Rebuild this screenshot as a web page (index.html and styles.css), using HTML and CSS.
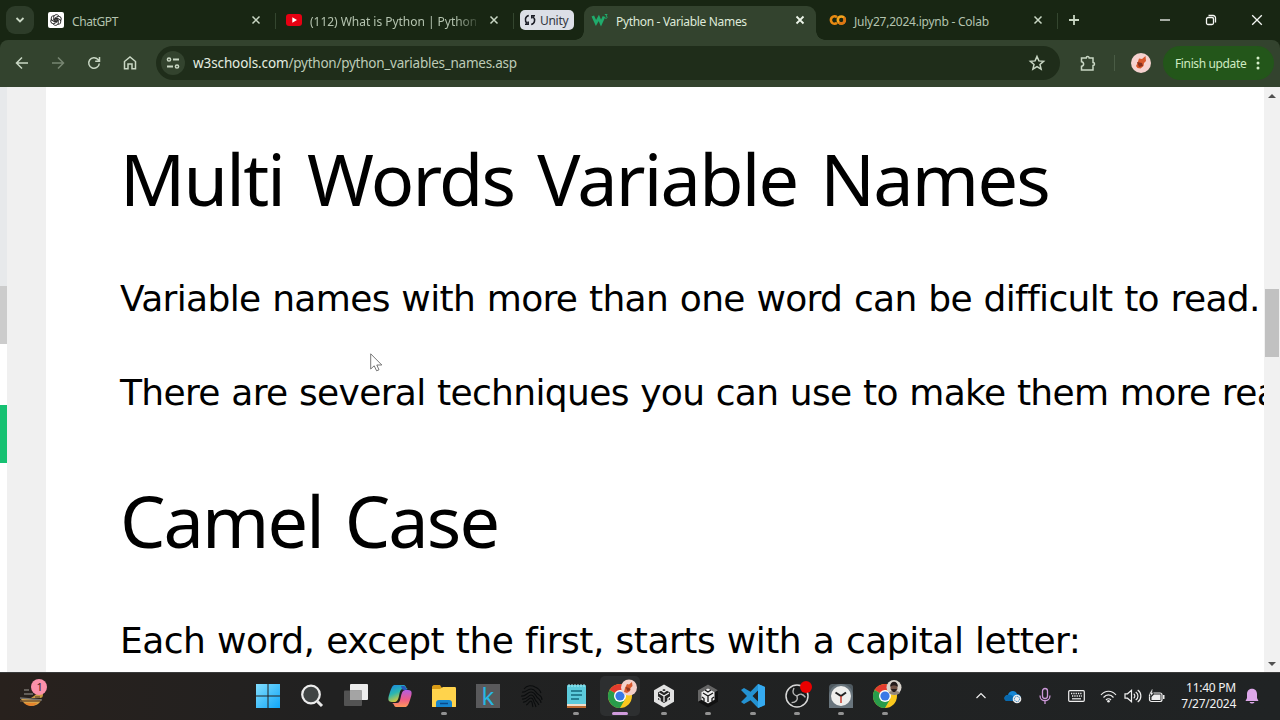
FILE: index.html
```
<!DOCTYPE html>
<html lang="en">
<head>
<meta charset="utf-8">
<title>Python - Variable Names</title>
<link rel="stylesheet" href="styles.css">
</head>
<body>

<div class="tabstrip">
  <div class="tab-search"><svg width="12" height="12" viewBox="0 0 12 12"><path d="M2.5 4l3.5 3.5L9.500 4" class="line bold"/></svg></div>
  <div class="tab">
    <svg class="favicon" viewBox="0 0 16 16"><rect width="16" height="16" rx="2" fill="#fff"/><g fill="none" stroke="#222" stroke-width=".9"><path id="knot" d="M6 4.300a2.600 2.600 0 0 1 4.700-.4L7 6v4.200"/><use href="#knot" transform="rotate(60 8 8)"/><use href="#knot" transform="rotate(120 8 8)"/><use href="#knot" transform="rotate(180 8 8)"/><use href="#knot" transform="rotate(240 8 8)"/><use href="#knot" transform="rotate(300 8 8)"/></g></svg>
    <span class="title t-gpt">ChatGPT</span>
    <svg class="close" viewBox="0 0 16 16"><path d="M4.500 4.500l7 7M11.500 4.500l-7 7" class="line"/></svg>
  </div>
  <div class="tab">
    <svg class="favicon" viewBox="0 0 16 16"><rect y="2" width="16" height="12" rx="3" fill="#e60012"/><path d="M6.300 5.300v5.400L11 8z" fill="#fff"/></svg>
    <span class="title fade t-yt">(112) What is Python | Python P</span>
    <svg class="close" viewBox="0 0 16 16"><path d="M4.500 4.500l7 7M11.500 4.500l-7 7" class="line"/></svg>
  </div>
  <div class="group-chip"><svg width="12" height="12" viewBox="0 0 12 12"><path d="M4.800 1.500C.8 2.500.5 7 3 9.300M7.200 10.500c4-1 4.300-5.500 1.800-7.800M1 10.200h3.200V7.500M11 1.800H7.800v2.700" fill="none" stroke="#191b25" stroke-width="1.500"/></svg><span>Unity</span></div>
  <div class="tab active">
    <svg class="favicon" viewBox="0 0 16 16"><path d="M.8 4l3.200 7 2.800-5 2.200 5 3-6.500" fill="none" stroke="#20ab6c" stroke-width="2.800"/><path d="M12.800 2.500h2.300l-1.200 1.600c2.400.2 1.300 3-.9 1.900" fill="none" stroke="#20ab6c"/></svg>
    <span class="title t-w3">Python - Variable Names</span>
    <svg class="close" viewBox="0 0 16 16"><path d="M4.500 4.500l7 7M11.500 4.500l-7 7" class="line bold"/></svg>
  </div>
  <div class="tab last">
    <svg class="favicon" viewBox="0 0 16 16"><g fill="none" stroke-width="2.600"><path d="M7 5.200A3.700 3.700 0 1 0 7 10.800" stroke="#e88a12"/><circle cx="11.300" cy="8" r="3.500" stroke="#f5a51d"/><path d="M8.800 10.500a3.500 3.500 0 0 0 5-5" stroke="#dc7412"/></g></svg>
    <span class="title t-colab">July27,2024.ipynb - Colab</span>
    <svg class="close" viewBox="0 0 16 16"><path d="M4.500 4.500l7 7M11.500 4.500l-7 7" class="line"/></svg>
  </div>
  <svg class="new-tab" width="16" height="16" viewBox="0 0 16 16"><path d="M8 3v10M3 8h10" class="line bold"/></svg>
  <div class="window-buttons">
    <svg width="12" height="12" viewBox="0 0 12 12"><path d="M1 6h10"/></svg>
    <svg width="12" height="12" viewBox="0 0 12 12"><rect x="1.500" y="3.500" width="7" height="7" rx="1.500"/><path d="M3.500 1.500h4.500a2.500 2.500 0 0 1 2.500 2.500v4.500"/></svg>
    <svg width="12" height="12" viewBox="0 0 12 12"><path d="M1.200 1.200l9.600 9.600M10.800 1.200L1.200 10.800"/></svg>
  </div>
</div>

<div class="toolbar-wrap">
<div class="toolbar">
  <div class="nav">
    <svg width="16" height="16" viewBox="0 0 16 16"><path d="M14 8H3M8 2.500L2.500 8 8 13.500" class="line"/></svg>
    <svg class="dim" width="16" height="16" viewBox="0 0 16 16"><path d="M2 8h11M8 2.500L13.500 8 8 13.500" class="line"/></svg>
    <svg width="16" height="16" viewBox="0 0 16 16"><path d="M13.300 8.500A5.300 5.300 0 1 1 12 4.500l1.300 1.500M13.500 2v4.300H9.200" class="line"/></svg>
    <svg width="16" height="16" viewBox="0 0 16 16"><path d="M2.500 6.500L8 2l5.500 4.500v7.300H10V9H6v4.800H2.500z" class="line"/></svg>
  </div>
  <div class="omnibox">
    <div class="site-info"><svg width="14" height="14" viewBox="0 0 14 14"><path d="M7 3.500h6M1 10.500h6" class="line bold"/><circle cx="3" cy="3.500" r="1.600" class="line"/><circle cx="11" cy="10.500" r="1.600" class="line"/></svg></div>
    <span class="url"><b>w3schools.com</b>/python/python_variables_names.asp</span>
    <svg class="star" width="16" height="16" viewBox="0 0 16 16"><path d="M8 1.500l1.900 4.400 4.700.4-3.600 3.100 1.100 4.700L8 11.600l-4.100 2.500L5 9.400 1.400 6.300l4.700-.4z" class="line"/></svg>
  </div>
  <svg class="puzzle" width="18" height="18" viewBox="0 0 18 18"><path d="M2.500 4h4.700a1.500 1.500 0 0 1 3 0H14v4.500a1.500 1.500 0 0 1 0 3V16H2.500v-3.700c2.800-.5 2.800-4.100 0-4.600z" class="line"/></svg>
  <div class="divider"></div>
  <svg class="avatar" width="20" height="20" viewBox="0 0 20 20"><circle cx="10" cy="10" r="10" fill="#f6d2cf"/><path d="M8 5.500l3 .5 3.500-3 .5 5-2 2-.5 3-3 2.500-3-.5-1.500-2 1.500-3z" fill="#d9582c"/><path d="M6 9l5 1 1 3-4 1z" fill="#88301e"/></svg>
  <div class="update"><span>Finish update</span><svg width="4" height="14" viewBox="0 0 4 14" fill="#d5efc9"><circle cx="2" cy="2" r="1.500"/><circle cx="2" cy="7" r="1.500"/><circle cx="2" cy="12" r="1.500"/></svg></div>
</div>
</div>

<div class="viewport">
  <div class="sidebar"><div class="side-top"></div><div class="side-thumb"></div><div class="side-gap"></div><div class="side-active"></div></div>
  <div class="side-scroll"></div>
  <div class="content">
    <h2 class="h-multi">Multi Words Variable Names</h2>
    <p class="p-one">Variable names with more than one word can be difficult to read.</p>
    <p class="p-two">There are several techniques you can use to make them more rea</p>
    <h2 class="h-camel">Camel Case</h2>
    <p class="p-three">Each word, except the first, starts with a capital letter:</p>
  </div>
  <div class="scrollbar">
    <svg width="8" height="4" viewBox="0 0 8 4"><path d="M0 4l4-4 4 4z" fill="#505050"/></svg>
    <div class="thumb"></div>
    <svg class="down" width="8" height="4" viewBox="0 0 8 4"><path d="M0 0l4 4 4-4z" fill="#505050"/></svg>
  </div>
</div>

<div class="taskbar">
  <svg class="widget" width="32" height="32" viewBox="0 0 32 32"><path d="M4 19h20c2 0 3-1 3-4-2-2-6-1-9 2l-3 2z" fill="#c99a45"/><path d="M5 20h20c-1 9-16 9-20 0z" fill="#d9a347"/><path d="M8 24h13c-3 4-9 4-13 0z" fill="#e5832c"/><path d="M8 11h5M8 15h9M4 19l22 2" stroke="#77736e" stroke-width="1.700"/><path d="M4 22h20M19 18h5" stroke="#725433" stroke-width="1.500"/><circle cx="23" cy="8" r="8" fill="#fb91ab"/><text x="20.500" y="12.200" class="badge">1</text></svg>
  <div class="apps">
    <div class="app"><svg width="24" height="24" viewBox="0 0 24 24"><defs><linearGradient id="win" x2="1" y2="1"><stop stop-color="#82ddfd"/><stop offset="1" stop-color="#10a6f8"/></linearGradient></defs><path d="M0 0h11.500v11.500H0zM12.500 0H24v11.500H12.500zM0 12.500h11.500V24H0zM12.500 12.500H24V24H12.500z" fill="url(#win)"/></svg></div>
    <div class="app"><svg width="24" height="24" viewBox="0 0 24 24"><path d="M17.500 17.500L22 22" stroke="#e8e8e8" stroke-width="3"/><circle cx="11" cy="10.500" r="8.800" fill="#414545" stroke="#ececec" stroke-width="2.200"/></svg></div>
    <div class="app"><svg width="24" height="24" viewBox="0 0 24 24"><rect x="6" width="18" height="16" rx="1" fill="#ececec"/><rect y="6.500" width="18" height="15.500" rx="1" fill="#535353"/><rect x="6" y="6.500" width="12" height="9.500" fill="#a4a4a4"/></svg></div>
    <div class="app"><svg width="24" height="24" viewBox="0 0 24 24"><defs><linearGradient id="copA" x2=".5" y2="1"><stop stop-color="#1b83e5"/><stop offset=".5" stop-color="#29b6b2"/><stop offset="1" stop-color="#f2cb26"/></linearGradient><linearGradient id="copB" x2="0" y2="1"><stop stop-color="#b45ee2"/><stop offset=".55" stop-color="#ee5b88"/><stop offset="1" stop-color="#ff9859"/></linearGradient></defs><path d="M7 1h9c2 0 2 4 4 4h-5c-3 0-3 3-4 7-1 4-2 6-5 6H4c-5 0-4-4-2-10C4 2 5 1 7 1z" fill="url(#copA)"/><path d="M17 23H8c-2 0-2-4-4-4h5c3 0 3-3 4-7 1-4 2-6 5-6h2c5 0 4 4 2 10-2 6-3 7-5 7z" fill="url(#copB)"/><path d="M13 2h3c2 0 2 4 4 4h-3c-3 0-3-1-4-4z" fill="#2858bd"/></svg></div>
    <div class="app open"><svg width="24" height="24" viewBox="0 0 24 24"><path d="M0 3c0-1 1-2 2-2h6l2 3h13v8H0z" fill="#d99b16"/><path d="M0 5h8l3-2h12c1 0 1 1 1 2v17c0 1 0 1-1 1H1c-1 0-1 0-1-1z" fill="#ffd34c"/><path d="M4 23v-4c0-2 1-3 3-3h10c2 0 3 1 3 3v4z" fill="#1685cf"/><path d="M8 19.500h8" stroke="#0a4989" stroke-width="1.500"/></svg></div>
    <div class="app kite"><span>k</span></div>
    <div class="app"><svg width="24" height="24" viewBox="0 0 24 24" fill="none" stroke="#0b0d0e" stroke-width="1.100"><path d="M4 5c3-4 8-4 11-2 3 1 5 3 6 6M2 8c4 1 5-3 9-3 5 0 4 4 8 6 2 1 3 3 3 5M1 12c5 1 6-4 10-4 5 0 4 5 8 7 1 1 2 2 2 4M2 15c5 1 6-4 9-4 4 0 3 5 6 7l2 3M3 18c4 1 5-4 8-4 3 0 2 4 4 6l1 3M6 21c2 0 3-4 5-4 2 1 1 4 2 6"/></svg></div>
    <div class="app open"><svg width="24" height="24" viewBox="0 0 24 24"><rect x="3" y="1" width="19" height="21" rx="1" fill="#5ccbdc"/><path d="M3 20h19v3H3z" fill="#f0dfcd"/><path d="M3 23h19" stroke="#bc6a31" stroke-width="2"/><path d="M7 7h11M7 11h11M7 15h8" stroke="#146a7c" stroke-width="1.400"/><path d="M5 0v3M8 0v3M11 0v3M14 0v3M17 0v3M20 0v3" stroke="#a9eef4"/></svg></div>
    <div class="app open current"><svg width="32" height="32" viewBox="0 0 32 32"><g id="chrome"><circle cx="16" cy="16" r="12" fill="#fac81e"/><path d="M16 16L5.600 10a12 12 0 0 1 20.800 0H16z" fill="#e33b2e"/><path d="M5.600 10A12 12 0 0 0 16 28l5.200-9L16 16z" fill="#299c4b"/><circle cx="16" cy="16" r="6" fill="#fff"/><circle cx="16" cy="16" r="4.600" fill="#3978e6"/></g><circle cx="25" cy="7.500" r="8" fill="#f4d0ca"/><path d="M23 4l2 .5 3-2.500.5 4-2 2-.5 3-3 2-3-1 1-4z" fill="#d9582c"/><path d="M21.500 7l4 1 1 2-3 1z" fill="#8f351e"/></svg></div>
    <div class="app open"><svg width="24" height="24" viewBox="0 0 24 24"><path d="M12 .5l10 5.700v11.600L12 23.500 2 17.800V6.200z" fill="#e2e2e2"/><path d="M12 5l6 3.500v7L12 19l-6-3.500v-7z" fill="#242424"/><path d="M12 12v6M12 12L7 9M12 12l5-3M9 6l3 2 3-2M6 13l2 1.500v3M18 13l-2 1.500v3" stroke="#ededed" stroke-width="1.300" fill="none"/></svg></div>
    <div class="app open"><svg width="24" height="24" viewBox="0 0 24 24"><path d="M12 .5l10 5.700v11.600L12 23.500 2 17.800V6.200z" fill="#111"/><path d="M12 .5l10 5.700-4 2.300-6-3.500-6 3.500v7l-4 2.300V6.200z" fill="#656565"/><path d="M12 4.500l6.500 3.700v7.600L12 19.500l-6.500-3.700V8.200z" fill="#ececec"/><path d="M12 12v6M12 12L7 9M12 12l5-3M9 6l3 2 3-2M6 13l2 1.500v3M18 13l-2 1.500v3" stroke="#171717" stroke-width="1.300" fill="none"/></svg></div>
    <div class="app open"><svg width="24" height="24" viewBox="0 0 24 24"><path d="M17 0l7 3v18l-7 3-7.500-7.700L3 20l-3-2 6-6-6-6 3-2 6.500 3.700zM17 6.500L11.500 12l5.500 5.500z" fill="#2492d2" fill-rule="evenodd"/><path d="M17 0l7 3v18l-7 3z" fill="#35aaf0"/></svg></div>
    <div class="app open"><svg width="32" height="32" viewBox="0 0 32 32"><circle cx="16" cy="16" r="11" fill="#191b1c" stroke="#d7d7d7" stroke-width="1.500"/><g fill="none" stroke="#b8b8b8" stroke-width="1.400"><path id="obs" d="M16 16c-4-1-5-4-3-8"/><use href="#obs" transform="rotate(120 16 16)"/><use href="#obs" transform="rotate(240 16 16)"/></g><circle cx="25" cy="7" r="6" fill="#eb0000"/></svg></div>
    <div class="app open"><svg width="24" height="24" viewBox="0 0 24 24"><path d="M0 24V4c0-3 1-4 4-4h16c3 0 4 1 4 4v20z" fill="#4f5a61"/><path d="M0 24V12C0-4 24-4 24 12v12z" fill="#69757d"/><circle cx="12" cy="12" r="10" fill="#eeeeec"/><path d="M6.500 8.500L12 12l5-3.500" fill="none" stroke="#222" stroke-width="2"/><path d="M12 12v7" stroke="#c83b2c" stroke-width="1.500"/></svg></div>
    <div class="app open"><svg width="32" height="32" viewBox="0 0 32 32"><use href="#chrome"/><circle cx="25" cy="7.500" r="7.500" fill="#d7d2cb"/><path d="M20 13c0-3 10-3 11 0-3 2.500-8 2.500-11 0z" fill="#92857a"/><circle cx="25" cy="8" r="3.500" fill="#705044"/><path d="M21 7c0-7 8-7 8 0-2-2-6-2-8 0zM22 9h6l-2 3h-2z" fill="#241b1b"/></svg></div>
  </div>
  <div class="tray">
    <svg width="12" height="12" viewBox="0 0 12 12"><path d="M1.500 8L6 3.500 10.500 8" class="tray-line"/></svg>
    <svg class="cloud" width="18" height="16" viewBox="0 0 18 16"><path d="M3 13c-4-1-3-6 1-6 1-5 8-5 9-1 4 0 5 5 2 7z" fill="#1687d5"/><path d="M4 7c3-1 5 1 8 4l-3 2H3c-4-1-3-6 1-6z" fill="#0869ae"/><circle cx="13" cy="11" r="4.300" fill="#eee"/><circle cx="13" cy="11" r="2.600" fill="none" stroke="#247ab5" stroke-dasharray="1.300 .7"/></svg>
    <svg class="mic" width="14" height="18" viewBox="0 0 14 18" fill="none" stroke="#cc98d8" stroke-width="1.300"><rect x="4.500" y="1.500" width="5" height="10" rx="2.500"/><path d="M2 8.500c0 7 10 7 10 0M7 14v3"/></svg>
    <svg class="keyboard" width="17" height="12" viewBox="0 0 17 12"><rect x=".7" y=".7" width="15.600" height="10.600" rx="1" class="tray-line"/><path d="M3 3.500h11M4 6h10" stroke="#eee" stroke-width="1.300" stroke-dasharray="1.300 1"/><path d="M4 8.800h9" class="tray-line"/></svg>
    <svg class="wifi" width="17" height="13" viewBox="0 0 17 13"><path d="M1 5c4-5 11-5 15 0M3.500 7.500c3-3.500 7-3.500 10 0M6 10c1.500-1.700 3.500-1.700 5 0" class="tray-line"/><circle cx="8.500" cy="11.200" r="1.300" fill="#eee"/></svg>
    <svg class="sound" width="17" height="14" viewBox="0 0 17 14"><path d="M1 4.800h2.500L7.500 1.300v11.400L3.500 9.200H1zM9.700 4.800c1.500 1 1.500 3.400 0 4.400M11.700 2.900c3 2 3 6.200 0 8.200M13.700 1c4.200 3 4.200 9 0 12" class="tray-line"/></svg>
    <svg class="battery" width="17" height="14" viewBox="0 0 17 14"><rect x="1.500" y="4" width="12.500" height="8.500" rx="2" class="tray-line"/><path d="M6 5.500h6.500V11H3.500V8zM15 6h1.500v4H15z" fill="#eee"/><path d="M4 0L1 5h2L2 8l4-4H4l1-4z" fill="#eee" stroke="#202324" stroke-width=".6"/></svg>
    <div class="clock"><div class="time">11:40 PM</div><div class="date">7/27/2024</div></div>
    <svg class="bell" width="14" height="16" viewBox="0 0 14 16"><path d="M2 6c0-7 10-7 10 0v4l1.500 3H.5L2 10zM4.500 14h5c-1 2-4 2-5 0z" fill="#dda7e9"/></svg>
  </div>
</div>

<svg class="cursor" width="13" height="19" viewBox="0 0 13 19"><path d="M.7.800v15.200l3.500-3.200 2.400 5 2.400-1-2.200-4.800h5z" fill="#fff" stroke="#555" stroke-width=".8"/></svg>
</body>
</html>
```
FILE: styles.css
```
* { box-sizing: border-box; }

body {
  margin: 0;
  width: 1280px;
  height: 720px;
  overflow: hidden;
  background: #fff;
  font-family: "Noto Sans", "Open Sans", sans-serif;
  font-size: 12px;
}

svg { display: block; flex: none; overflow: visible; }
.line { fill: none; stroke: #c9d7c4; stroke-width: 1.5; }
.bold { stroke-width: 1.8; }

/* Tab strip */

.tabstrip {
  display: flex;
  align-items: flex-start;
  height: 40px;
  padding-left: 6px;
  background: #182613;
  color: #b4c3af;
}
.tab-search {
  width: 28px;
  height: 28px;
  margin: 6px 6px 0 0;
  padding: 8px;
  border-radius: 9px;
  background: #2d3c29;
}
.tab {
  position: relative;
  display: flex;
  align-items: center;
  width: 238px;
  height: 28px;
  margin-top: 6px;
  padding: 0 14px 0 8px;
}
.tab::after {
  content: "";
  position: absolute;
  right: 2px;
  top: 7px;
  width: 1px;
  height: 16px;
  background: #34462f;
}
.favicon { width: 16px; height: 16px; margin-right: 8px; }
.close { width: 16px; height: 16px; }
.title {
  flex: 1;
  min-width: 0;
  white-space: nowrap;
  line-height: 20px;
  margin: 3px 10px 0 0;
}
.t-gpt { letter-spacing: -0.4px; }
.t-yt { letter-spacing: -0.03px; }
.t-w3 { letter-spacing: -0.33px; }
.t-colab { letter-spacing: -0.24px; }
.fade {
  -webkit-mask-image: linear-gradient(to right, #000 145px, transparent 172px);
  mask-image: linear-gradient(to right, #000 145px, transparent 172px);
}
.group-chip {
  display: flex;
  align-items: center;
  gap: 4px;
  width: 54px;
  height: 20px;
  margin: 10px 10px 0 4px;
  padding-left: 4px;
  border-radius: 5px;
  background: #dcdfe7;
  color: #33363d;
  letter-spacing: -0.3px;
}
.active {
  width: 232px;
  height: 34px;
  margin-right: 6px;
  padding: 0 8px 6px;
  border-radius: 9px 9px 0 0;
  background: #33432e;
  color: #dfead9;
}
.active::before, .active::after {
  content: "";
  position: absolute;
  top: auto;
  bottom: 0;
  width: 9px;
  height: 9px;
  background: radial-gradient(circle at 0 0, #182613 8.5px, #33432e 9px);
}
.active::before { left: -9px; }
.active::after {
  right: -9px;
  background: radial-gradient(circle at 100% 0, #182613 8.5px, #33432e 9px);
}
.active .line { stroke: #edf5e9; }
.new-tab { margin: 12px 0 0 6px; }
.window-buttons {
  display: flex;
  gap: 34px;
  margin: 14px 17px 0 auto;
  fill: none;
  stroke: #f5f7f4;
  stroke-width: 1.3;
}

/* Toolbar */

.toolbar-wrap { height: 47px; background: #182613; }
.toolbar {
  display: flex;
  align-items: center;
  height: 47px;
  padding: 0 6px 1px 14px;
  border-radius: 8px 8px 0 0;
  background: #33432e;
}
.nav { display: flex; gap: 20px; margin-right: 18px; }
.dim { opacity: .45; }
.omnibox {
  display: flex;
  align-items: center;
  width: 904px;
  height: 34px;
  padding: 0 15px 0 5px;
  border-radius: 17px;
  background: #1f2d1a;
}
.site-info {
  width: 24px;
  height: 24px;
  padding: 5px;
  border-radius: 50%;
  background: #33432e;
}
.url {
  margin-left: 8px;
  color: #bdcbb7;
  font-size: 13.5px;
  letter-spacing: -0.25px;
  white-space: nowrap;
}
.url b { color: #e5ede1; font-weight: normal; letter-spacing: -0.1px; }
.star { margin-left: auto; }
.puzzle { margin-left: 19px; }
.divider { width: 1px; height: 16px; margin: 0 16px 0 17px; background: #4a5c45; }
.update {
  display: flex;
  align-items: center;
  justify-content: space-between;
  width: 111px;
  height: 34px;
  margin-left: auto;
  padding: 0 14px 0 12px;
  border-radius: 17px;
  background: #23561a;
  color: #cfebc2;
  letter-spacing: -0.37px;
  white-space: nowrap;
}

/* Page */

.viewport { display: flex; height: 585px; background: #fff; }
.sidebar { flex: none; width: 7px; }
.side-top { height: 199px; background: #e7e9eb; }
.side-thumb { height: 58px; background: #ccc; }
.side-gap { height: 61px; }
.side-active { height: 58px; background: #16c172; }
.side-scroll { flex: none; width: 39px; background: #f0f0f0; }
.content {
  flex: none;
  width: 1218px;
  height: 585px;
  padding: 37px 0 0 74px;
  overflow: hidden;
  color: #000;
  white-space: nowrap;
}
h2 {
  margin: 0 0 40px;
  font-size: 72px;
  font-weight: normal;
  line-height: 108px;
}
p {
  margin: 0 0 40px;
  font-family: "DejaVu Sans", Verdana, sans-serif;
  font-size: 36px;
  line-height: 54px;
}
.h-multi { letter-spacing: -1.75px; word-spacing: 5.8px; }
.h-camel { margin-top: 46px; letter-spacing: -1.9px; word-spacing: 5px; }
.p-one { letter-spacing: -0.65px; word-spacing: 0.8px; }
.p-two { letter-spacing: -0.65px; word-spacing: 0.6px; }
.p-three { letter-spacing: -0.5px; word-spacing: 0.7px; }
.scrollbar {
  flex: 1;
  display: flex;
  flex-direction: column;
  align-items: center;
  padding: 7px 0 6px;
  background: #f1f1f1;
}
.thumb { width: 14px; height: 68px; margin-top: 191px; background: #c1c1c1; }
.down { margin-top: auto; }

/* Taskbar */

.taskbar {
  display: flex;
  height: 48px;
  border-top: 1px solid #3a3b3b;
  background: linear-gradient(to right, #28211d, #212121 330px, #202324);
}
.widget { margin: 6px 0 0 16px; }
.badge { font-size: 11px; fill: #391d27; }
.apps { display: flex; margin-left: 197.500px; }
.app {
  position: relative;
  display: flex;
  align-items: center;
  justify-content: center;
  width: 44.1px;
  height: 46px;
}
.open::after {
  content: "";
  position: absolute;
  left: 19px;
  bottom: 4px;
  width: 6px;
  height: 3px;
  border-radius: 2px;
  background: #929292;
}
.current::before {
  content: "";
  position: absolute;
  inset: 3px 2px;
  border-radius: 5px;
  background: #2d2f30;
}
.current svg { position: relative; }
.current::after { left: 14px; width: 16px; background: #d09bdc; }
.kite span {
  width: 24px;
  height: 24px;
  background: #59595b;
  color: #28b6e3;
  font-size: 24px;
  line-height: 23px;
  text-align: center;
}
.tray {
  display: flex;
  align-items: center;
  height: 46px;
  margin-left: auto;
  padding-right: 21px;
}
.tray-line { fill: none; stroke: #eee; stroke-width: 1.2; }
.cloud { margin-left: 17px; }
.mic { margin-left: 16px; }
.keyboard { margin-left: 16px; }
.wifi { margin-left: 15px; }
.sound { margin-left: 7px; }
.battery { margin-left: 7px; }
.clock {
  width: 71px;
  color: #f2f2f2;
  line-height: 16px;
  letter-spacing: -0.25px;
  text-align: right;
  white-space: nowrap;
}
.bell { margin-left: 9px; }

.cursor { position: absolute; left: 370px; top: 353px; }
```
